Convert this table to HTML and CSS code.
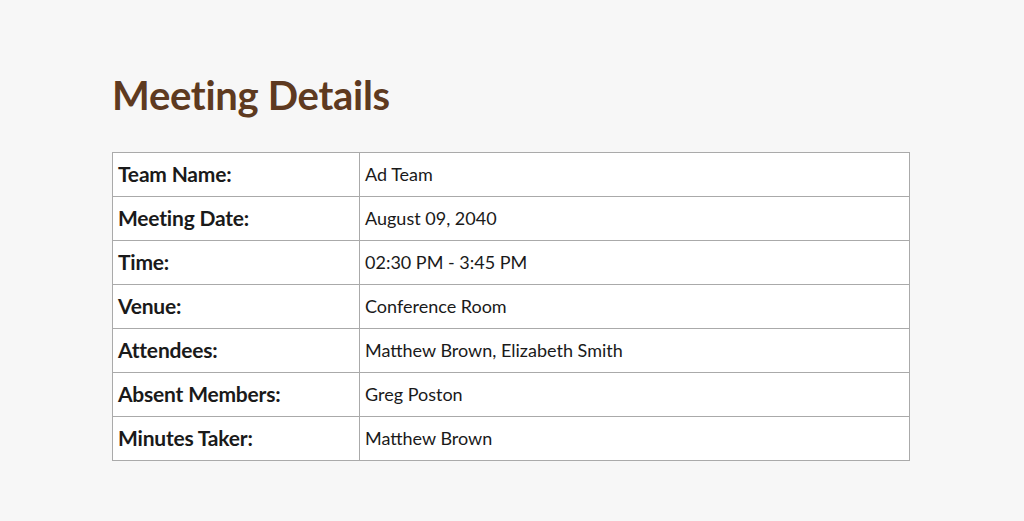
FILE: index.html
```html
<!DOCTYPE html>
<html>
<head>
	<title>Meeting Details</title>
	<link rel="stylesheet" href="styles.css">
</head>
<body>
<div class="page">
  <h1>Meeting Details</h1>
  <table class="details">
    <tr><th>Team Name:</th><td>Ad Team</td></tr>
    <tr><th>Meeting Date:</th><td>August 09, 2040</td></tr>
    <tr><th>Time:</th><td>02:30 PM - 3:45 PM</td></tr>
    <tr><th>Venue:</th><td>Conference Room</td></tr>
    <tr><th>Attendees:</th><td>Matthew Brown, Elizabeth Smith</td></tr>
    <tr><th>Absent Members:</th><td>Greg Poston</td></tr>
    <tr><th>Minutes Taker:</th><td>Matthew Brown</td></tr>
  </table>
</div>
</body>
</html>
```

FILE: styles.css
```css
body{
  margin: 0;
  background: #f7f7f7;
  font-family: Lato, "Noto Sans", sans-serif;
  color: #1a1a1a;
}
.page{
  width: 798px;
  margin: 0 auto;
  padding-top: 69px;
  padding-right: 2px;
}
h1{
  margin: 0 0 31px 0;
  font-size: 40px;
  font-weight: 700;
  letter-spacing: -0.3px;
  color: #5e3a20;
  line-height: 52px;
}
.details{
  width: 798px;
  border-collapse: collapse;
  background: #fff;
}
.details th, .details td{
  border: 1px solid #aaaaaa;
  height: 41px;
  padding: 0 5px 2px 5px;
  text-align: left;
  vertical-align: middle;
}
.details th{
  width: 236px;
  font-size: 21px;
  font-weight: 700;
  letter-spacing: -0.2px;
}
.details td{
  font-size: 18px;
}
```
